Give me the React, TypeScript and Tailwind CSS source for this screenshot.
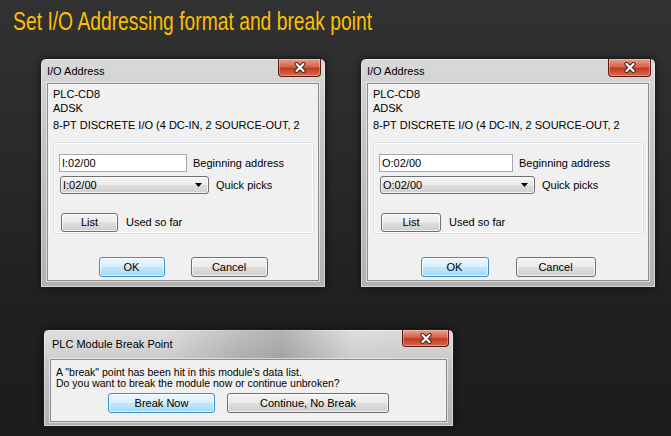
import React from "react";

const stdBtn =
  "border border-[#707070] bg-[linear-gradient(to_bottom,#f4f4f4_0%,#ebebeb_48%,#dddddd_52%,#cfcfcf_100%)] shadow-[inset_0_0_0_1px_rgba(255,255,255,0.7)]";
const okBtn =
  "border border-[#3c8fc8] bg-[linear-gradient(to_bottom,#eaf6fd_0%,#d9f0fc_48%,#bee6fd_52%,#a7d9f5_100%)] shadow-[inset_0_0_0_1px_rgba(255,255,255,0.7)]";

function CloseX() {
  return (
    <svg width="14" height="11" viewBox="0 0 14 11">
      <path d="M3.5 2L10.5 9M10.5 2L3.5 9" stroke="#4a2216" strokeWidth="4.2" strokeLinecap="round" />
      <path d="M3.5 2L10.5 9M10.5 2L3.5 9" stroke="#ffffff" strokeWidth="2.2" strokeLinecap="round" />
    </svg>
  );
}

function CloseButton({ className }: { className: string }) {
  return (
    <div
      className={`flex items-center justify-center self-start rounded-b-[4px] border border-t-0 border-[#5a1d12] bg-[linear-gradient(to_bottom,#e9a08d_0%,#d6654b_45%,#c23a20_55%,#d66a4f_100%)] shadow-[inset_0_0_0_1px_rgba(255,255,255,0.3)] ${className}`}
    >
      <CloseX />
    </div>
  );
}

function Button({ label, primary, className }: { label: string; primary?: boolean; className: string }) {
  return (
    <div className={`flex items-center justify-center rounded-[3px] text-[11px] text-black ${primary ? okBtn : stdBtn} ${className}`}>
      {label}
    </div>
  );
}

function Window({
  title,
  className,
  titleClass,
  closeClass,
  clientClass,
  children,
}: {
  title: string;
  className: string;
  titleClass: string;
  closeClass: string;
  clientClass: string;
  children: React.ReactNode;
}) {
  return (
    <div
      className={`flex flex-col rounded-t-[6px] border border-[#1c1c1c] bg-[linear-gradient(to_bottom,#d9d9d9,#c4c4c4_35%,#b2b2b2)] shadow-[0_0_6px_rgba(0,0,0,0.6),inset_0_0_0_1px_rgba(255,255,255,0.4)] ${className}`}
    >
      <div className={`flex justify-between pr-[4px] ${titleClass}`}>
        <span className="self-center text-[11px] text-black">{title}</span>
        <CloseButton className={closeClass} />
      </div>
      <div
        className={`mx-[6px] flex-1 border border-[#8c8c8c] bg-[#f0f0f0] shadow-[0_0_0_1px_rgba(255,255,255,0.5)] ${clientClass}`}
      >
        {children}
      </div>
    </div>
  );
}

type AddrProps = {
  value: string;
  width: string;
  groupW: string;
  inputW: string;
  comboW: string;
  listW: string;
  okW: string;
  cancelW: string;
  gap: string;
};

function AddressDialog({ value, width, groupW, inputW, comboW, listW, okW, cancelW, gap }: AddrProps) {
  return (
    <Window
      title="I/O Address"
      className={`h-[230px] ${width}`}
      titleClass="h-[24px] pl-[6px]"
      closeClass="h-[18px] w-[43px]"
      clientClass="mb-[6px] pl-[5px]"
    >
      <div className="mt-[3px] text-[11px] leading-[14px] text-black">
        <div>PLC-CD8</div>
        <div>ADSK</div>
        <div className="mt-[3px] whitespace-nowrap">8-PT DISCRETE I/O (4 DC-IN, 2 SOURCE-OUT, 2</div>
      </div>
      <div
        className={`mt-[10px] box-border h-[92px] rounded-[3px] border border-[#d5dfe5] pl-[5px] pt-[11px] shadow-[inset_0_0_0_1px_rgba(255,255,255,0.8)] ${groupW}`}
      >
        <div className="flex items-center gap-[6px] text-[11px] text-black">
          <div className={`flex h-[18px] items-center border border-[#a5a8ae] bg-white pl-[2px] ${inputW}`}>{value}</div>
          <span>Beginning address</span>
        </div>
        <div className="mt-[4px] flex items-center gap-[7px] pl-[1px] text-[11px] text-black">
          <div className={`flex h-[18px] items-center justify-between rounded-[3px] pl-[2px] pr-[6px] ${stdBtn} ${comboW}`}>
            <span>{value}</span>
            <svg width="7" height="4" viewBox="0 0 7 4">
              <path d="M0 0H7L3.5 4Z" fill="#000" />
            </svg>
          </div>
          <span>Quick picks</span>
        </div>
        <div className="mt-[19px] flex items-center gap-[8px] pl-[2px] text-[11px] text-black">
          <Button label="List" className={`h-[19px] ${listW}`} />
          <span>Used so far</span>
        </div>
      </div>
      <div className={`mt-[23px] flex justify-center pr-[5px] ${gap}`}>
        <Button label="OK" primary className={`h-[20px] ${okW}`} />
        <Button label="Cancel" className={`h-[20px] ${cancelW}`} />
      </div>
    </Window>
  );
}

export default function App() {
  return (
    <div className="h-[436px] w-[671px] overflow-hidden bg-[linear-gradient(to_bottom,#323232_0%,#2b2b2b_30%,#202020_70%,#1c1c1c_100%)] font-['Liberation_Sans',Arial,sans-serif]">
      <h1 className="origin-left scale-x-[0.771] whitespace-nowrap pl-[17px] pt-[6px] text-[25px] leading-[30px] text-[#fcbf00]">
        Set I/O Addressing format and break point
      </h1>

      <div className="mt-[22px] flex gap-[34px] pl-[40px]">
        <AddressDialog
          value="I:02/00"
          width="w-[286px]"
          groupW="w-[261px]"
          inputW="w-[128px]"
          comboW="w-[149px]"
          listW="w-[57px]"
          okW="w-[66px]"
          cancelW="w-[77px]"
          gap="gap-[26px]"
        />
        <AddressDialog
          value="O:02/00"
          width="w-[296px]"
          groupW="w-[271px]"
          inputW="w-[134px]"
          comboW="w-[155px]"
          listW="w-[60px]"
          okW="w-[68px]"
          cancelW="w-[80px]"
          gap="gap-[27px]"
        />
      </div>

      <div className="mt-[41px] pl-[43px]">
        <Window
          title="PLC Module Break Point"
          className="h-[98px] w-[411px]"
          titleClass="h-[29px] pl-[8px] bg-[linear-gradient(to_right,rgba(255,255,255,0.15)_0%,rgba(255,255,255,0.1)_30%,rgba(0,0,0,0.12)_48%,rgba(0,0,0,0.18)_58%,rgba(255,255,255,0.1)_75%,rgba(255,255,255,0.05)_100%)]"
          closeClass="h-[17px] w-[47px]"
          clientClass="mb-[4px]"
        >
          <div className="pl-[5px] pt-[7px] text-[10.5px] leading-[11px] text-black">
            <div>A "break" point has been hit in this module's data list.</div>
            <div>Do you want to break the module now or continue unbroken?</div>
          </div>
          <div className="mt-[4px] flex justify-center gap-[12px]">
            <Button label="Break Now" primary className="h-[20px] w-[107px]" />
            <Button label="Continue, No Break" className="h-[20px] w-[162px]" />
          </div>
        </Window>
      </div>
    </div>
  );
}
